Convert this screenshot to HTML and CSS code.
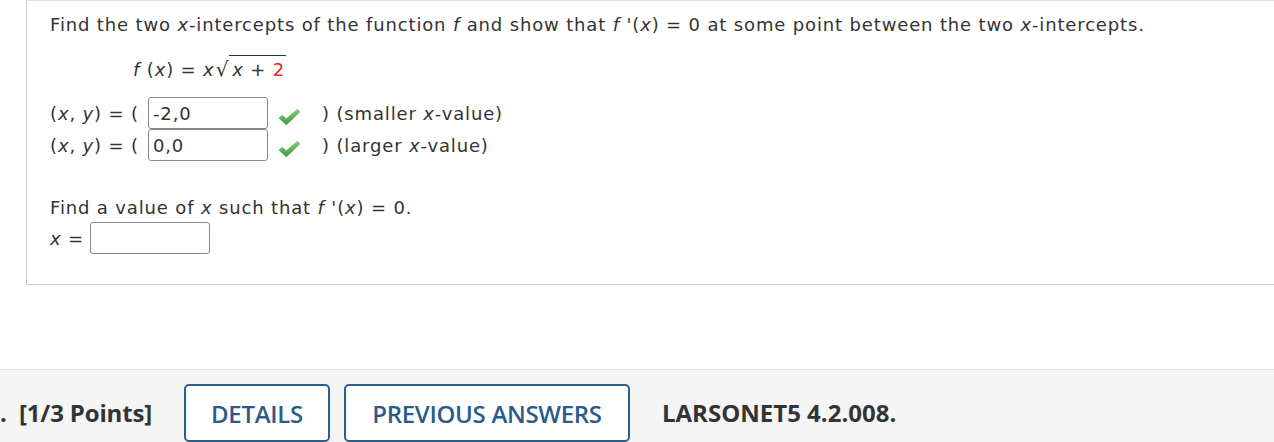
FILE: index.html
```html
<!DOCTYPE html>
<html lang="en">
<head>
  <meta charset="UTF-8" />
  <title>Question 3</title>
  <link rel="stylesheet" href="styles.css">
</head>
<body>
  <div class="question">
    <p class="line">Find the two <i>x</i>-intercepts of the function <i>f</i> and show that <i>f</i> '(<i>x</i>) = 0 at some point between the two <i>x</i>-intercepts.</p>
    <p class="line formula">
      <i>f</i> (<i>x</i>) = <i>x</i><span class="rad">√</span><span class="radicand"><i>x</i> + <span class="red">2</span></span>
    </p>

    <div class="answers">
      <div class="row">
        <span class="label">(<i>x</i>, <i>y</i>) = (</span>
        <input class="field" type="text" value="-2,0">
        <svg class="check" width="23" height="18" viewBox="0 0 22 17">
          <defs>
            <linearGradient id="g1" x1="0" y1="0" x2="0" y2="1">
              <stop offset="0" stop-color="#86cc7f"/>
              <stop offset="1" stop-color="#3f9a3a"/>
            </linearGradient>
          </defs>
          <path d="M0.5 9.5 L4 6.5 L8 10 L18.5 0.5 L21.5 3.5 L8 16.5 Z" fill="url(#g1)"/>
        </svg>
        <span class="after">) (smaller <i>x</i>-value)</span>
      </div>
      <div class="row">
        <span class="label">(<i>x</i>, <i>y</i>) = (</span>
        <input class="field" type="text" value="0,0">
        <svg class="check" width="23" height="18" viewBox="0 0 22 17">
          <path d="M0.5 9.5 L4 6.5 L8 10 L18.5 0.5 L21.5 3.5 L8 16.5 Z" fill="url(#g1)"/>
        </svg>
        <span class="after">) (larger <i>x</i>-value)</span>
      </div>
    </div>

    <p class="line second">Find a value of <i>x</i> such that <i>f</i> '(<i>x</i>) = 0.</p>
    <div class="row">
      <span class="label short"><i>x</i> =</span>
      <input class="field" type="text" value="">
    </div>
  </div>

  <div class="toolbar">
    <span class="qnum">.</span>
    <span class="points">[1/3 Points]</span>
    <button class="btn details">DETAILS</button>
    <button class="btn previous">PREVIOUS ANSWERS</button>
    <span class="source">LARSONET5 4.2.008.</span>
  </div>
</body>
</html>
```
FILE: styles.css
```css
* {
  box-sizing: border-box;
}

body {
  margin: 0;
  background: #fff;
  font-family: "DejaVu Sans", Verdana, sans-serif;
  font-size: 18px;
  letter-spacing: 0.85px;
  color: #333;
  overflow: hidden;
}

/* Question box */
.question {
  margin-left: 26px;
  height: 285px;
  border-top: 1px solid #ddd;
  border-left: 1px solid #ccc;
  border-bottom: 1px solid #ccc;
  padding: 11px 0 0 23px;
}

.line {
  margin: 0;
  line-height: 26px;
  white-space: nowrap;
}

.formula {
  margin-top: 18px;
  padding-left: 83px;
}

.rad {
  font-size: 20px;
  margin-left: 1px;
}

.radicand {
  border-top: 1px solid #333;
  padding: 3px 1px 0 3px;
}

.red {
  color: #e5261f;
}

.answers {
  margin-top: 14px;
}

.row {
  display: flex;
  align-items: center;
  height: 32px;
  white-space: nowrap;
}

.label {
  width: 98px;
}

.label.short {
  width: 40px;
}

.field {
  width: 120px;
  height: 32px;
  border: 1px solid #888;
  border-radius: 3px;
  font-family: "DejaVu Sans", Verdana, sans-serif;
  font-size: 18px;
  letter-spacing: 0.85px;
  color: #333;
  padding: 0 4px;
  background: #fff;
}

.check {
  margin-left: 10px;
  margin-top: 8px;
}

.after {
  margin-left: 21px;
}

.second {
  margin-top: 34px;
}

.second + .row {
  margin-top: 1px;
}

/* Bottom toolbar */
.toolbar {
  margin-top: 84px;
  height: 80px;
  background: #f5f5f5;
  border-top: 1px solid #ddd;
  display: flex;
  align-items: flex-start;
  padding-top: 14px;
  font-family: "Open Sans", sans-serif;
  font-weight: 700;
  font-size: 24px;
  letter-spacing: -0.15px;
  color: #333;
}

.toolbar span {
  line-height: 58px;
}

.qnum {
  width: 19px;
}

.points {
  width: 165px;
}

.btn {
  height: 58px;
  padding: 0;
  border: 2px solid #2d5f8e;
  border-radius: 5px;
  background: #fff;
  color: #2b5b8c;
  font-family: "Open Sans", sans-serif;
  font-weight: 600;
  font-size: 24px;
  letter-spacing: -0.3px;
  margin-right: 14px;
}

.details {
  width: 146px;
}

.previous {
  width: 286px;
}

.source {
  margin-left: 18px;
  letter-spacing: 0;
}
```
